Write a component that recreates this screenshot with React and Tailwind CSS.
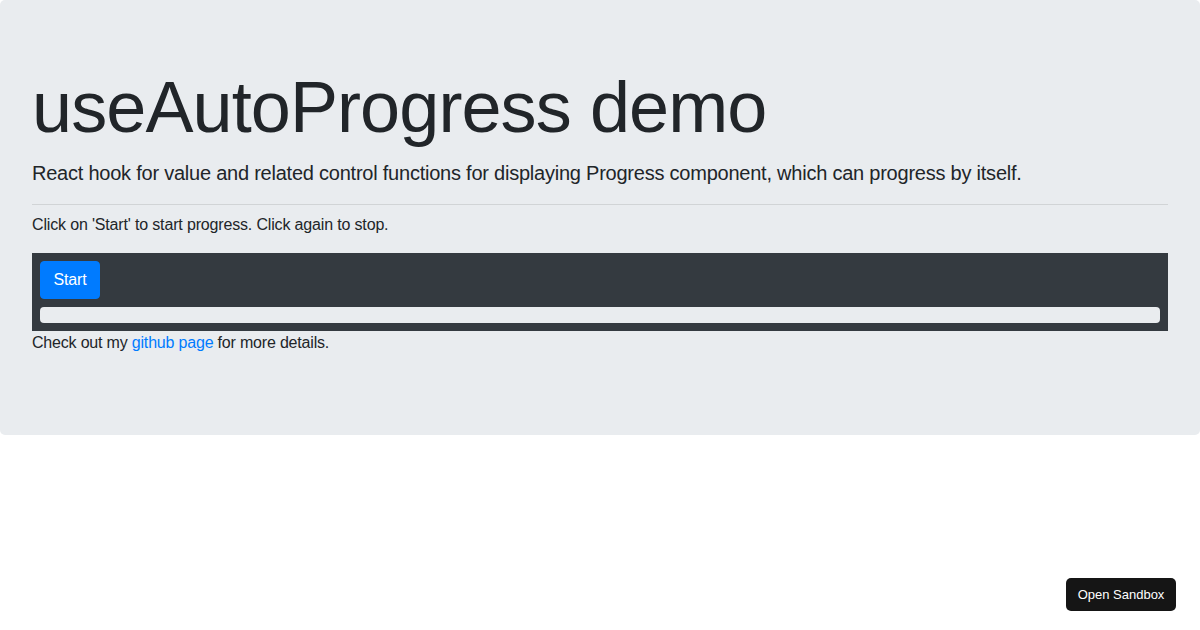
export default function App() {
  return (
    <div
      className="min-h-[630px] bg-white text-[#212529]"
      style={{ fontFamily: '"Liberation Sans", Arial, sans-serif' }}
    >
      <div className="rounded-[5px] bg-[#e9ecef] px-8 pt-16 pb-20">
        <h1 className="mb-2 text-[72px] font-light leading-[86.4px] tracking-[-0.9px]">useAutoProgress demo</h1>
        <p className="mb-4 text-[20px] font-light leading-[30px] tracking-[-0.23px]">
          React hook for value and related control functions for displaying Progress component, which can progress by itself.
        </p>
        <hr className="border-0 border-t border-black/10" />
        <p className="mt-2 mb-4 text-base leading-6 tracking-[-0.16px]">
          Click on 'Start' to start progress. Click again to stop.
        </p>
        <div className="flex flex-col gap-2 bg-[#343a40] p-2">
          <div>
            <button className="h-[38px] w-[60px] rounded-[4px] border border-[#007bff] bg-[#007bff] text-base leading-6 tracking-[-0.16px] text-white">
              Start
            </button>
          </div>
          <div className="h-4 w-full rounded-[4px] bg-[#e9ecef]" />
        </div>
        <p className="text-base leading-6 tracking-[-0.19px]">
          Check out my <a className="text-[#007bff]" href="#">github page</a> for more details.
        </p>
      </div>
      <button className="fixed right-6 bottom-[19px] h-[33px] w-[110px] rounded-[5px] bg-[#151515] text-[13px] text-white">
        Open Sandbox
      </button>
    </div>
  );
}
